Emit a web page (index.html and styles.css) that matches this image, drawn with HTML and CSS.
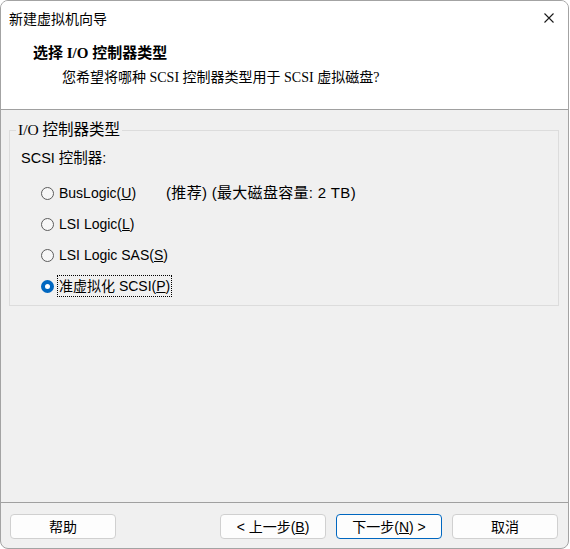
FILE: index.html
```html
<!DOCTYPE html>
<html lang="zh-CN">
<head>
<meta charset="utf-8">
<title>新建虚拟机向导</title>
<link rel="stylesheet" href="styles.css">
</head>
<body>
<div class="window">
  <div class="titlebar">
    <span class="title">新建虚拟机向导</span>
    <svg class="close" width="10" height="10" viewBox="0 0 10 10"><path d="M0.5 0.5 L9.5 9.5 M9.5 0.5 L0.5 9.5" stroke="#1a1a1a" stroke-width="1.1" fill="none"/></svg>
  </div>
  <div class="header">
    <div class="heading">选择 I/O 控制器类型</div>
    <div class="subtitle">您希望将哪种 SCSI 控制器类型用于 SCSI 虚拟磁盘?</div>
  </div>
  <div class="content">
    <fieldset class="group">
      <legend class="legend">I/O 控制器类型</legend>
      <div class="label">SCSI 控制器:</div>
      <div class="radios">
        <div class="row"><span class="radio"></span><span class="text">BusLogic(<u>U</u>)</span><span class="note">(推荐) (最大磁盘容量: 2 TB)</span></div>
        <div class="row"><span class="radio"></span><span class="text">LSI Logic(<u>L</u>)</span></div>
        <div class="row"><span class="radio"></span><span class="text">LSI Logic SAS(<u>S</u>)</span></div>
        <div class="row"><span class="radio checked"></span><span class="text focus">准虚拟化 SCSI(<u>P</u>)</span></div>
      </div>
    </fieldset>
  </div>
  <div class="footer">
    <button class="btn">帮助</button>
    <div class="spacer"></div>
    <div class="btns">
      <button class="btn">&lt; 上一步(<u>B</u>)</button>
      <button class="btn default">下一步(<u>N</u>) &gt;</button>
      <button class="btn">取消</button>
    </div>
  </div>
</div>
</body>
</html>
```
FILE: styles.css
```css
html, body {
  margin: 0;
  padding: 0;
  background: #ffffff;
}
body {
  font-family: "Liberation Sans", "Noto Sans CJK SC", sans-serif;
  font-size: 14px;
  color: #000;
}
.window {
  box-sizing: border-box;
  width: 569px;
  height: 549px;
  border: 1px solid #a3a3a3;
  border-radius: 8px;
  overflow: hidden;
  display: flex;
  flex-direction: column;
  background: #f0f0f0;
}
.titlebar {
  height: 34px;
  flex: none;
  background: #fff;
  display: flex;
  align-items: center;
  padding: 0 14px 0 8px;
}
.title {
  font-family: "Noto Sans CJK SC", sans-serif;
  font-size: 14px;
  line-height: 20px;
  color: #000;
  flex: 1;
}
.close {
  display: block;
}
.header {
  height: 66px;
  flex: none;
  background: #fff;
  border-bottom: 1px solid #a0a0a0;
  padding: 8px 0 0 32px;
}
.heading {
  font-family: "Liberation Serif", "Noto Sans CJK SC", serif;
  font-weight: bold;
  font-size: 15px;
  line-height: 20px;
}
.subtitle {
  font-family: "Liberation Serif", "Noto Sans CJK SC", serif;
  font-size: 14px;
  line-height: 20px;
  margin-top: 5px;
  padding-left: 29px;
}
.content {
  flex: 1;
  padding: 12px 9px 0 8px;
}
.group {
  margin: 0;
  padding: 0 0 9px 11px;
  border: 1px solid #dcdcdc;
  min-width: 0;
}
.legend {
  font-family: "Liberation Serif", "Noto Sans CJK SC", serif;
  font-size: 15.5px;
  line-height: 16px;
  padding: 0 2px;
  margin-left: -5px;
}
.label {
  line-height: 20px;
  margin-top: 10px;
  font-size: 14.5px;
}
.radios {
  display: flex;
  flex-direction: column;
  gap: 11px;
  margin-top: 15px;
  padding-left: 20px;
}
.row {
  display: flex;
  align-items: center;
  height: 20px;
}
.radio {
  box-sizing: border-box;
  width: 13px;
  height: 13px;
  border: 1px solid #5c5c5c;
  border-radius: 50%;
  background: #f7f7f7;
  margin-right: 4px;
  flex: none;
}
.radio.checked {
  border: 4px solid #0067c0;
  background: #fff;
}
.text {
  line-height: 20px;
  padding: 0 1px;
}
.focus {
  outline: 1px dotted #000;
  outline-offset: 0;
}
.note {
  font-size: 15px;
  letter-spacing: 0.3px;
  margin-left: 29px;
  line-height: 20px;
}
.footer {
  height: 46px;
  flex: none;
  border-top: 1px solid #a0a0a0;
  display: flex;
  align-items: flex-start;
  padding: 11px 10px 0 9px;
  box-sizing: border-box;
}
.spacer { flex: 1; }
.btns {
  display: flex;
  gap: 10px;
}
.btn {
  box-sizing: border-box;
  width: 106px;
  height: 25px;
  border: 1px solid #d0d0d0;
  border-radius: 4px;
  background: #fdfdfd;
  font-family: "Liberation Sans", "Noto Sans CJK SC", sans-serif;
  font-size: 14px;
  color: #000;
  padding: 0;
  line-height: 20px;
}
.btn.default {
  border-color: #0067c0;
}
```
